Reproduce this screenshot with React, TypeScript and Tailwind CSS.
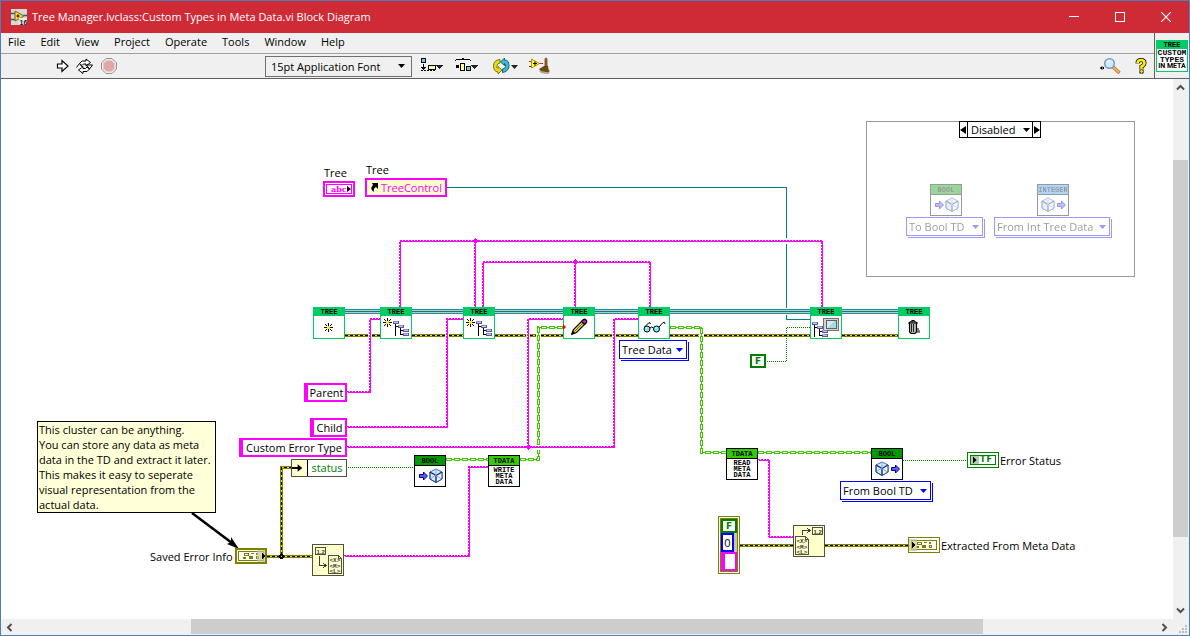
import React from "react";

type Kids = { children?: React.ReactNode };

const MAGENTA = "#ff00ff";
const CHAIN = "#43c800";

/* ---------- wires ---------- */

function StringWire({ d }: { d: string }) {
  return (
    <g fill="none" stroke={MAGENTA}>
      <path d={d} strokeWidth="1" transform="translate(.5 .5)" />
      <path d={d} strokeWidth="1" strokeDasharray="2 1" transform="translate(-.5 -.5)" />
    </g>
  );
}

function ClusterWire({ d }: { d: string }) {
  return (
    <g fill="none">
      <path d={d} stroke="#808000" strokeWidth="3" />
      <path d={d} stroke="#f0e800" strokeWidth="1" />
      <path d={d} stroke="#000" strokeWidth="1" strokeDasharray="3 2" />
    </g>
  );
}

function ObjectWire({ x1, x2 }: { x1: number; x2: number }) {
  return (
    <g>
      <rect x={x1} y="309" width={x2 - x1} height="5" fill="#c4c4c4" />
      <rect x={x1} y="309" width={x2 - x1} height="1" fill="#0c98a0" />
      <rect x={x1} y="311" width={x2 - x1} height="1" fill="#0c7c84" />
      <rect x={x1} y="313" width={x2 - x1} height="1" fill="#0c98a0" />
    </g>
  );
}

function ChainWire({ d }: { d: string }) {
  return (
    <g fill="none">
      <path d={d} stroke={CHAIN} strokeWidth="1" />
      <path d={d} stroke={CHAIN} strokeWidth="3" strokeDasharray="6 2" />
      <path d={d} stroke="#fff" strokeWidth="1" strokeDasharray="4 4" strokeDashoffset="-1" />
    </g>
  );
}

function BoolWire({ d }: { d: string }) {
  return <path d={d} fill="none" stroke="#008000" strokeWidth="1" strokeDasharray="1 1" />;
}

function Junction({ x, y, color }: { x: number; y: number; color: string }) {
  return <path d={`M${x} ${y - 3}l3 3l-3 3l-3-3z`} fill={color} />;
}

function Wires() {
  const objects = [[345, 380], [412, 463], [495, 563], [595, 638], [670, 810], [842, 898]];
  const errors = [
    [345, 368], [372, 380], [412, 445], [449, 463], [495, 526], [530, 536],
    [541, 563], [595, 612], [616, 638], [670, 699], [704, 810], [842, 898],
  ];
  return (
    <svg className="absolute inset-0 size-full" shapeRendering="crispEdges" aria-hidden="true">
      <g transform="translate(-1 -79)">
        {objects.map(([a, b]) => <ObjectWire key={a} x1={a} x2={b} />)}
        {errors.map(([a, b]) => <ClusterWire key={a} d={`M${a} 335.5H${b}`} />)}
        <ClusterWire d="M267 556.500H312" />
        <ClusterWire d="M281.500 555V467.500H291" />
        <circle cx="281.500" cy="556.500" r="2.500" fill="#000" />
        <rect x="281" y="556" width="1" height="1" fill="#f0e800" />
        <ClusterWire d="M740 545.500H793" />
        <ClusterWire d="M825 545.500H908" />

        <path d="M447 187.500H786.500V238M786.500 244V308M786.500 315V319.500H810" fill="none" stroke="#008080" />

        <StringWire d="M400 307V241H822V307" />
        <StringWire d="M475 241V307" />
        <StringWire d="M483 307V262H650V307" />
        <StringWire d="M575 262V307" />
        <StringWire d="M347 392H370V319H380" />
        <StringWire d="M347 427H447V319H463" />
        <StringWire d="M347 447H614V319H638" />
        <StringWire d="M528 447V319H563" />
        <StringWire d="M344 556H469V467H488" />
        <StringWire d="M758 460H769V537H793" />
        <Junction x={475} y={241} color={MAGENTA} />
        <Junction x={575} y={262} color={MAGENTA} />
        <Junction x={528} y={447} color={MAGENTA} />

        <ChainWire d="M446 459.500H488" />
        <ChainWire d="M520 459.500H538.500V450" />
        <ChainWire d="M538.500 445V327.500H563" />
        <ChainWire d="M670 327.500H701.500V452.500H726" />
        <ChainWire d="M758 452.500H871" />

        <BoolWire d="M346 467.500H414" />
        <BoolWire d="M903 460.500H967" />
        <BoolWire d="M767 361.500H786.500V327.500H810" />

        <g shapeRendering="auto">
          <path d="M192 513L232 543" stroke="#000" strokeWidth="2.500" />
          <path d="M239 549L227 544L231 542L231 537z" fill="#000" />
        </g>
      </g>
    </svg>
  );
}

/* ---------- node glyphs (30 x 22 body area) ---------- */

function Spark({ x, y }: { x: number; y: number }) {
  return (
    <g transform={`translate(${x} ${y})`} shapeRendering="crispEdges">
      <path d="M0 4.500H9M4.500 0V9" stroke="#000" />
      <path d="M1 1h1v1h1v1h-1v-1h-1zM7 1h1v1h-1v1h-1v-1h1zM2 6h1v1h-1v1h-1v-1h1zM6 6h1v1h1v1h-1v-1h-1z" fill="#000" />
      <path d="M3 3h1v1h-1zM5 3h1v1h-1zM3 5h1v1h-1zM5 5h1v1h-1zM3 4h3v1h-3zM4 3h1v3h-1z" fill="#ffee00" />
    </g>
  );
}

function Branch({ x, y }: { x: number; y: number }) {
  return (
    <g transform={`translate(${x} ${y})`} shapeRendering="crispEdges">
      <path d="M2.500 3V15M3 5.500H6M7.500 6V13.500H11M8 9.500H11" fill="none" stroke="#000" />
      {[[0, 0], [5, 4], [10, 8], [10, 12]].map(([a, b]) => (
        <g key={`${a}-${b}`}>
          <rect x={a} y={b} width="6" height="3" fill="#5a5a90" />
          <rect x={a + 1} y={b + 1} width="4" height="1" fill="#c4c4ff" />
          <rect x={a} y={b} width="5" height="1" fill="#8c8cc8" />
        </g>
      ))}
    </g>
  );
}

function Glyph({ children }: Kids) {
  return (
    <svg viewBox="0 0 30 22" className="h-[22px] w-[30px] shrink-0" aria-hidden="true">
      {children}
    </svg>
  );
}

const glyphs = {
  spark: <Glyph><Spark x={10} y={7} /></Glyph>,
  add: <Glyph><Spark x={2} y={2} /><Branch x={12} y={5} /></Glyph>,
  pencil: (
    <Glyph>
      <path d="M8 18L9.500 13.500L18.500 4.500L21.500 7.500L12.500 16.500z" fill="#e8e050" stroke="#000" strokeWidth="1.200" />
      <path d="M10.500 15.500L19.500 6.500" stroke="#4a4420" strokeWidth=".8" />
      <path d="M7 19l1.500-4.500l3 3z" fill="#000" />
      <path d="M17.500 5.500L19 4Q20.500 2.500 22 4Q23.500 5.500 22 7L20.500 8.500z" fill="#d020c0" stroke="#000" strokeWidth="1.200" />
    </Glyph>
  ),
  glasses: (
    <Glyph>
      <circle cx="8" cy="13" r="3" fill="#70f0ff" stroke="#000" />
      <circle cx="17.500" cy="13" r="3" fill="#70f0ff" stroke="#000" />
      <path d="M7 12h1M16.500 12h1" stroke="#fff" strokeWidth="1.500" />
      <path d="M11 12Q12.500 10 14.500 12M5.500 11L9.500 7Q11.500 6 11.500 8M20 11L24 6.500Q26 5.500 26 8" fill="none" stroke="#000" />
    </Glyph>
  ),
  display: (
    <Glyph>
      <g shapeRendering="crispEdges">
        <rect x="12" y="2" width="16" height="13" fill="#707070" />
        <rect x="13" y="3" width="14" height="11" fill="#d4d4d4" />
        <rect x="15" y="4" width="11" height="9" fill="#606060" />
        <rect x="16" y="5" width="9" height="7" fill="#a4dce0" />
        <path d="M16 12V5H24z" fill="#d4ecec" />
      </g>
      <Branch x={1} y={6} />
    </Glyph>
  ),
  trash: (
    <Glyph>
      <path d="M18 12h2v2h1v3h-3z" fill="#808080" />
      <path d="M10.500 6.500h7v9.500l-1.500 1.500h-4l-1.500-1.500z" fill="#b8b8b8" stroke="#000" strokeWidth="1.200" />
      <path d="M9.500 7Q14 3 18.500 7zM12.500 4.500h3" fill="#909090" stroke="#000" />
      <path d="M12.500 8v8M14.500 8v8" stroke="#222" />
    </Glyph>
  ),
};

function Cube({ x }: { x: number }) {
  return (
    <g transform={`translate(${x} 4)`}>
      <path d="M6 0L12 3V10L6 13.500L0 10V3z" fill="#dcecff" stroke="#3868b8" />
      <path d="M6 6.500L12 3V10L6 13.500z" fill="#eef6ff" />
      <path d="M0 3L6 6.500V13.500M6 6.500L12 3" fill="none" stroke="#0c2c78" strokeWidth="1.400" />
      <path d="M6 0V6L0 10M6 7L12 10" fill="none" stroke="#88a8dc" />
      <path d="M0 3V10L6 13.500L12 10V3" fill="none" stroke="#204890" />
    </g>
  );
}

function BlueArrow({ x }: { x: number }) {
  return <path d={`M${x} 9.500h4v-2.500l4 4l-4 4v-2.500h-4z`} fill="#5a5aff" stroke="#000090" />;
}

function PackGlyph({ out = false }: { out?: boolean }) {
  return (
    <Glyph>
      {out ? <><Cube x={4} /><BlueArrow x={19.500} /></> : <><BlueArrow x={4.500} /><Cube x={15} /></>}
    </Glyph>
  );
}

/* ---------- nodes ---------- */

function TreeNode({ at, children }: Kids & { at: string }) {
  return (
    <div className={`absolute flex size-8 flex-col border border-[#00cc66] bg-white ${at}`}>
      <div className="h-2 bg-[#00cc66] text-center font-['Liberation_Mono',monospace] text-[7px] leading-[8px] font-bold">TREE</div>
      {children}
    </div>
  );
}

function TypeNode({ at, title, head, children }: Kids & { at: string; title: string; head: string }) {
  return (
    <div className={`absolute flex size-8 flex-col border border-black bg-white font-['Liberation_Mono',monospace] text-[7px] font-bold ${at}`}>
      <div className={`flex h-[10px] shrink-0 items-center justify-center border-b border-black leading-[8px] ${head}`}>{title}</div>
      <div className="flex h-[20px] flex-col items-center justify-center overflow-hidden leading-[6px]">{children}</div>
    </div>
  );
}

function TypeSelect({ at, label, value }: { at: string; label: string; value: string }) {
  return (
    <div className={`absolute flex h-[19px] items-center border border-[#0000ff] bg-white shadow-[1px_1px_0_#fff,2px_2px_0_#0000ff] ${at}`}>
      <select aria-label={label} className="h-full w-full appearance-none bg-transparent pl-[2px] leading-[15px] outline-none">
        <option>{value}</option>
      </select>
      <svg viewBox="0 0 7 4" className="pointer-events-none absolute right-[3px] h-1 w-[7px]" aria-hidden="true">
        <path d="M0 0h7L3.500 4z" fill="#0000ff" />
      </svg>
    </div>
  );
}

function StringConstant({ at, children }: Kids & { at: string }) {
  return (
    <div className={`absolute flex h-[19px] items-center justify-center border-2 border-l-4 border-[#ff00ff] bg-white ${at}`}>
      {children}
    </div>
  );
}

function Label({ at, children }: Kids & { at: string }) {
  return <div className={`absolute ${at}`}>{children}</div>;
}

function FlattenNode({ at, reverse = false }: { at: string; reverse?: boolean }) {
  return (
    <svg viewBox="0 0 32 32" className={`absolute size-8 ${at}`} aria-hidden="true" shapeRendering="crispEdges">
      <rect x=".5" y=".5" width="31" height="31" fill="#ffffcc" stroke="#505040" />
      <g transform={reverse ? "translate(16 -1)" : undefined} fill="none" stroke="#505040">
        <rect x="3.500" y="3.500" width="10" height="7" />
        <text x="4.500" y="9.500" fontSize="6" fontWeight="bold" fontFamily="Liberation Sans, sans-serif" fill="#404030" stroke="none">1.2</text>
      </g>
      <path d={reverse ? "M9.500 10V5.500H17M14 3l3 2.500l-3 2.500" : "M7.500 12V21.500H14M11 19l3 2.500l-3 2.500"} fill="none" stroke="#404030" />
      <g transform={reverse ? "translate(-14 0)" : undefined}>
        <path d="M16.500 11.500H26.500L29.500 14.500V29.500H16.500z" fill="#ffffcc" stroke="#505040" />
        <path d="M26.500 11.500V14.500H29.500" fill="none" stroke="#505040" />
        <g fontSize="6" fontWeight="bold" fontFamily="Liberation Mono, monospace" fill="#404030">
          <text x="17.500" y="18">&lt;X&gt;</text>
          <text x="17.500" y="23.500">&lt;M&gt;</text>
          <text x="17.500" y="29">&lt;L&gt;</text>
        </g>
      </g>
    </svg>
  );
}

function ClusterTerminal({ at, indicator = false }: { at: string; indicator?: boolean }) {
  return (
    <svg viewBox="0 0 32 16" className={`absolute h-4 w-8 ${at}`} aria-hidden="true" shapeRendering="crispEdges">
      <rect width="32" height="16" fill="#808000" />
      {indicator ? <rect x="1" y="1" width="30" height="14" fill="#fff" /> : <rect x="2" y="2" width="28" height="12" fill="#fff" />}
      <rect x="3.500" y="3.500" width="25" height="9" fill="none" stroke="#808000" />
      <path d="M9 5h5v3h-5zM16 5h3v1h-3zM21 5h2v2h-2zM8 9h3v2h-3zM14 8h4v3h-4zM21 8h3v3h-3z" fill="#808000" />
      <path d="M10 6h3v1h-3zM22 9h1v1h-1z" fill="#fff" />
      <rect x={indicator ? 1 : 22} y="2" width="8" height="12" fill="#c4c8a0" fillOpacity=".7" />
      <path d={indicator ? "M4 4.500l3.500 3.500l-3.500 3.500z" : "M27 4.500l3.500 3.500l-3.500 3.500z"} fill="#000" />
    </svg>
  );
}

function Diagram() {
  return (
    <main className="relative min-w-0 flex-1 overflow-hidden bg-white leading-[15px] whitespace-nowrap">
      <Wires />

      <Label at="left-[323px] top-[86px]">Tree</Label>
      <div className="absolute left-[322px] top-[102px] flex h-4 w-8 border-2 border-[#ff00ff] bg-white p-px">
        <div className="flex w-full items-center justify-between border border-[#ff00ff] pl-1 font-['DejaVu_Serif',serif] text-[8px] leading-[8px] font-bold text-[#ff00ff]">
          abc
          <svg viewBox="0 0 4 6" className="h-[6px] w-1" aria-hidden="true"><path d="M0 0l4 3l-4 3z" /></svg>
        </div>
      </div>

      <Label at="left-[365px] top-[83px]">Tree</Label>
      <div className="absolute left-[364px] top-[99px] flex h-[19px] w-[82px] items-center justify-between border-2 border-[#ff00ff] bg-[#ffffcc] px-[3px] text-[#ff00ff]">
        <svg viewBox="0 0 8 9" className="h-[9px] w-2" aria-hidden="true">
          <path d="M2 0h6v6l-2-2q-3 1-2 5q-5-3-1-7z" fill="#000" />
        </svg>
        TreeControl
      </div>

      <TreeNode at="left-[312px] top-[228px]">{glyphs.spark}</TreeNode>
      <TreeNode at="left-[379px] top-[228px]">{glyphs.add}</TreeNode>
      <TreeNode at="left-[462px] top-[228px]">{glyphs.add}</TreeNode>
      <TreeNode at="left-[562px] top-[228px]">{glyphs.pencil}</TreeNode>
      <TreeNode at="left-[637px] top-[228px]">{glyphs.glasses}</TreeNode>
      <TreeNode at="left-[809px] top-[228px]">{glyphs.display}</TreeNode>
      <TreeNode at="left-[897px] top-[228px]">{glyphs.trash}</TreeNode>
      <svg viewBox="0 0 3 6" className="absolute left-[562px] top-[245px] h-[6px] w-[3px]" aria-hidden="true">
        <path d="M0 0l3 3l-3 3z" fill="#f00" />
      </svg>
      <TypeSelect at="left-[618px] top-[261px] w-[68px]" label="Tree node type" value="Tree Data" />

      <div className="absolute left-[749px] top-[275px] flex h-[14px] w-4 items-center justify-center border-2 border-[#008000] bg-white font-['DejaVu_Sans',sans-serif] text-[9px] leading-[10px] font-bold text-[#008000]">F</div>

      <StringConstant at="left-[303px] top-[304px] w-[43px]">Parent</StringConstant>
      <StringConstant at="left-[309px] top-[339px] w-[37px]">Child</StringConstant>
      <StringConstant at="left-[238px] top-[359px] w-[108px]">Custom Error Type</StringConstant>

      <div className="absolute left-[290px] top-[380px] flex h-[18px] w-[56px] border border-[#505040] bg-white text-[#008000]">
        <svg viewBox="0 0 16 16" className="h-4 w-4 shrink-0 border-r border-black bg-[#ffffcc]" aria-hidden="true">
          <path d="M0 7h6v-3l5 4l-5 4v-3h-6z" fill="#000" />
        </svg>
        <span className="flex-1 text-center leading-[16px]">status</span>
      </div>

      <p className="absolute left-[36px] top-[342px] w-[179px] border border-black bg-[#ffffd8] px-px whitespace-pre">
        {"This cluster can be anything.\nYou can store any data as meta\ndata in the TD and extract it later.\nThis makes it easy to seperate\nvisual representation from the\nactual data."}
      </p>

      <Label at="left-[149px] top-[470px]">Saved Error Info</Label>
      <ClusterTerminal at="left-[234px] top-[469px]" />
      <FlattenNode at="left-[311px] top-[465px]" />

      <TypeNode at="left-[413px] top-[376px]" title="BOOL" head="bg-[#009900]"><PackGlyph /></TypeNode>
      <TypeNode at="left-[487px] top-[376px]" title="TDATA" head="bg-[#33cc00]">
        <span>WRITE</span><span>META</span><span>DATA</span>
      </TypeNode>
      <TypeNode at="left-[725px] top-[369px]" title="TDATA" head="bg-[#33cc00]">
        <span>READ</span><span>META</span><span>DATA</span>
      </TypeNode>
      <TypeNode at="left-[870px] top-[369px]" title="BOOL" head="bg-[#009900]"><PackGlyph out /></TypeNode>
      <TypeSelect at="left-[839px] top-[402px] w-[91px]" label="Conversion" value="From Bool TD" />

      <div className="absolute left-[966px] top-[373px] flex h-4 w-8 border border-[#008000] bg-white p-[2px]">
        <div className="flex w-full items-center justify-between border border-[#008000] pr-[3px] font-['DejaVu_Sans',sans-serif] text-[8px] leading-[10px] font-bold text-[#008000]">
          <svg viewBox="0 0 8 8" className="h-2 w-2 bg-[#b0d0b0]" aria-hidden="true"><path d="M2 .5l3.500 3.500l-3.500 3.500z" /></svg>
          <span>T</span>
          <span>F</span>
        </div>
      </div>
      <Label at="left-[999px] top-[374px]">Error Status</Label>

      <div className="absolute left-[717px] top-[437px] flex h-[58px] w-[22px] flex-col items-start border border-[#808000] bg-white p-px">
        <div className="w-full border border-[#808000] bg-[#c8c8a0]">
          <div className="flex h-[14px] w-4 items-center justify-center border-2 border-[#008000] bg-white font-['DejaVu_Sans',sans-serif] text-[9px] leading-[10px] font-bold text-[#008000]">F</div>
          <div className="flex h-[19px] w-[13px] items-center justify-center border-2 border-[#0000ff] bg-white">0</div>
          <div className="h-[19px] w-4 border-2 border-l-4 border-[#ff00ff] bg-white" />
        </div>
      </div>
      <FlattenNode at="left-[792px] top-[446px]" reverse />
      <ClusterTerminal at="left-[907px] top-[458px]" indicator />
      <Label at="left-[940px] top-[459px]">Extracted From Meta Data</Label>

      <section className="absolute left-[865px] top-[42px] h-[156px] w-[269px] border border-[#999999]">
        <div className="opacity-40">
          <TypeNode at="left-[63px] top-[62px]" title="BOOL" head="bg-[#009900]"><PackGlyph /></TypeNode>
          <TypeNode at="left-[170px] top-[62px]" title="INTEGER" head="bg-[#3399ff]"><PackGlyph out /></TypeNode>
          <TypeSelect at="left-[39px] top-[95px] w-[77px]" label="Disabled Bool conversion" value="To Bool TD" />
          <TypeSelect at="left-[127px] top-[95px] w-[116px]" label="Disabled Int conversion" value="From Int Tree Data" />
        </div>
        <div className="absolute left-[92px] -top-px flex h-[17px] w-[82px] border border-black bg-white">
          <button aria-label="Previous case" className="flex w-2 items-center border-r border-black">
            <svg viewBox="0 0 6 8" className="h-2 w-[6px]" aria-hidden="true"><path d="M6 0v8L0 4z" /></svg>
          </button>
          <div className="relative flex flex-1 items-center">
            <select aria-label="Case" className="w-full appearance-none bg-transparent pl-[3px] leading-[15px] outline-none">
              <option>Disabled</option>
            </select>
            <svg viewBox="0 0 7 4" className="pointer-events-none absolute right-[2px] h-1 w-[7px]" aria-hidden="true"><path d="M0 0h7L3.500 4z" /></svg>
          </div>
          <button aria-label="Next case" className="flex w-2 items-center justify-end border-l border-black">
            <svg viewBox="0 0 6 8" className="h-2 w-[6px]" aria-hidden="true"><path d="M0 0v8l6-4z" /></svg>
          </button>
        </div>
      </section>
    </main>
  );
}

/* ---------- window chrome ---------- */

function TitleBar() {
  return (
    <header className="flex h-8 shrink-0 items-center bg-[#ce2b37] pl-[10px] text-white">
      <svg viewBox="0 0 16 16" className="mr-[5px] size-4" aria-hidden="true">
        <rect width="16" height="16" fill="#d8d8d4" />
        <path d="M0 4.500h5M0 10.500h5M12 6.500h4" stroke="#0868a8" strokeWidth="1.500" />
        <path d="M4 2l9 5l-9 5z" fill="#ffd840" stroke="#886000" />
        <path d="M5.500 7h3M7 5.500v3" stroke="#000" />
        <rect x="8" y="9" width="8" height="7" fill="#e8e8e8" />
        <text x="8.500" y="15.500" fontSize="7" fontWeight="bold" fontFamily="Liberation Sans, sans-serif" fill="#222">16</text>
      </svg>
      <h1 className="flex-1 truncate pb-[2px]">Tree Manager.lvclass:Custom Types in Meta Data.vi Block Diagram</h1>
      <button aria-label="Minimize" className="flex h-8 w-[46px] items-center justify-center">
        <svg viewBox="0 0 10 10" className="size-[10px]" shapeRendering="crispEdges" aria-hidden="true"><path d="M0 4.500h10" stroke="#fff" /></svg>
      </button>
      <button aria-label="Maximize" className="flex h-8 w-[46px] items-center justify-center">
        <svg viewBox="0 0 10 10" className="size-[10px]" shapeRendering="crispEdges" aria-hidden="true"><path d="M.5.5h9v9h-9z" fill="none" stroke="#fff" /></svg>
      </button>
      <button aria-label="Close" className="flex h-8 w-[46px] items-center justify-center">
        <svg viewBox="0 0 10 10" className="size-[10px]" aria-hidden="true"><path d="M0 0l10 10M10 0L0 10" stroke="#fff" strokeWidth="1.200" /></svg>
      </button>
    </header>
  );
}

function Caret() {
  return <path d="M18 8h7l-3.500 4z" fill="#222" />;
}

function Tool({ label, className, children }: Kids & { label: string; className: string }) {
  return (
    <button aria-label={label} className={`shrink-0 ${className}`}>
      {children}
    </button>
  );
}

function Toolbar() {
  return (
    <div className="flex h-6 items-center pl-[54px]">
      <Tool label="Run" className="mr-[7px]">
        <svg viewBox="0 0 14 16" className="h-4 w-[14px]" aria-hidden="true">
          <path d="M2.500 6h4.500v-3.500l6 5.500l-6 5.500v-3.500h-4.500z" fill="#fff" stroke="#000" strokeWidth="1.200" />
        </svg>
      </Tool>
      <Tool label="Run continuously" className="mr-2">
        <svg viewBox="0 0 17 16" className="h-4 w-[17px]" aria-hidden="true">
          <path d="M3.500 5.500L6 3H10V1L14.500 4.500L10 8V6H7.500L6 7.500z" fill="#fff" stroke="#000" />
          <path d="M13.500 11L11 13.500H7V15.500L2.500 12L7 8.500V10.500H9.500L11 9z" fill="#fff" stroke="#000" />
          <path d="M.5 9.500L3.500 5.500L6.500 9.500M10.500 7L13.500 11L16.500 7z" fill="#fff" stroke="#000" />
        </svg>
      </Tool>
      <Tool label="Abort" className="mr-[148px]">
        <svg viewBox="0 0 16 16" className="size-4" aria-hidden="true">
          <path d="M5 .5h6l4.500 4.500v6L11 15.500H5L.5 11V5z" fill="#f4e8e8" stroke="#909090" />
          <path d="M5.500 2.500h5l3 3v5l-3 3h-5l-3-3v-5z" fill="#dca8a8" />
        </svg>
      </Tool>
      <div className="relative mr-2 flex h-[21px] w-[147px] items-center border border-[#707070] bg-[#f0f0f0]">
        <select aria-label="Text settings" className="h-full w-full appearance-none bg-transparent pl-[5px] leading-[15px] outline-none">
          <option>15pt Application Font</option>
        </select>
        <svg viewBox="0 0 7 4" className="pointer-events-none absolute right-[6px] h-1 w-[7px]" aria-hidden="true"><path d="M0 0h7L3.500 4z" /></svg>
      </div>
      <Tool label="Align objects" className="mr-[9px]">
        <svg viewBox="0 0 26 18" className="h-[18px] w-[26px]" shapeRendering="crispEdges" aria-hidden="true">
          <rect x="1.500" y="1.500" width="4" height="4" fill="#60d0f0" stroke="#000" />
          <rect x="8.500" y="8.500" width="7" height="4" fill="#ffff90" stroke="#000" />
          <path d="M3.500 7v6" stroke="#000" />
          <path d="M1 10h5v1h-1v1h-1v1h-1v-1h-1v-1h-1z" fill="#000" />
          <path d="M1 13.500h15" stroke="#000" strokeDasharray="2 1" />
          <g transform="translate(-2 0)"><Caret /></g>
        </svg>
      </Tool>
      <Tool label="Distribute objects" className="mr-3">
        <svg viewBox="0 0 26 18" className="h-[18px] w-[26px]" shapeRendering="crispEdges" aria-hidden="true">
          <path d="M0 3.500l2-1h5l1-1.500l1 1.500h5l2 1" fill="none" stroke="#000" />
          <rect x="1" y="8" width="3" height="3" />
          <rect x="5.500" y="6.500" width="4" height="7" fill="#ffff90" stroke="#000" />
          <rect x="11.500" y="9.500" width="4" height="4" fill="#60d0f0" stroke="#000" />
          <g transform="translate(-2 0)"><Caret /></g>
        </svg>
      </Tool>
      <Tool label="Reorder" className="mr-[10px]">
        <svg viewBox="0 0 26 18" className="h-[18px] w-[26px]" aria-hidden="true">
          <path d="M7 2.500Q.5 3 .5 9Q.5 14.500 5 15V17L9 13L5 9.500V11.500Q3.500 11 4 8.500Q4.500 6 7 6z" fill="#e8dc20" stroke="#807800" />
          <path d="M9.500 15.500Q16 14.500 16 8.500Q16 3 11.500 3V1L7.500 5L11.500 8.500V6.500Q13 7 12.500 9.500Q12 12 9.500 12z" fill="#40b8d0" stroke="#106878" />
          <Caret />
        </svg>
      </Tool>
      <Tool label="Clean up diagram" className="">
        <svg viewBox="0 0 22 18" className="h-[18px] w-[22px]" aria-hidden="true">
          <path d="M10 14l4-3l7 2l-1 4h-3l-5-1z" fill="#b0a898" />
          <path d="M0 4.500h3M9 6.500h5" stroke="#e02020" />
          <path d="M0 9.500h3" stroke="#2020e0" />
          <path d="M2.500 2l8 4.500l-8 4.500z" fill="#ffff20" stroke="#c09000" />
          <path d="M4 6.500h4M6 4.500v4" stroke="#000" />
          <path d="M10 12l5-3h4l1 6h-3l-5-1z" fill="#704810" />
          <path d="M16 9V2.500q0-1.500 1-1.500q1 0 1 1.500V9z" fill="#a07028" stroke="#604010" strokeWidth=".8" />
        </svg>
      </Tool>
      <div className="flex flex-1 items-center justify-end gap-3 pr-[6px]">
        <Tool label="Search" className="">
          <svg viewBox="0 0 22 18" className="h-[18px] w-[22px]" aria-hidden="true">
            <path d="M-.5 11l3-2v4zM3 10h1v2h-1z" fill="#000" />
            <path d="M13 10l6.500 6" stroke="#b87830" strokeWidth="3.500" />
            <path d="M13 10l6 5.500" stroke="#f0b060" strokeWidth="2" />
            <circle cx="9.500" cy="6.500" r="4.800" fill="#d0ecff" stroke="#7898c8" strokeWidth="1.500" />
            <path d="M7 6Q7.500 4 10 3.500" fill="none" stroke="#fff" strokeWidth="1.500" />
          </svg>
        </Tool>
        <Tool label="Context help" className="">
          <svg viewBox="0 0 14 18" className="h-[18px] w-[14px]" aria-hidden="true">
            <path d="M3.500 6.500Q3.500 3 7 3Q10.500 3 10.500 6Q10.500 8 7.500 9.500V12" fill="none" stroke="#000" strokeWidth="4" />
            <path d="M5.500 12.500h4v4h-4z" fill="#000" />
            <path d="M3.500 6.500Q3.500 3 7 3Q10.500 3 10.500 6Q10.500 8 7.500 9.500V12" fill="none" stroke="#ffee00" strokeWidth="2.600" />
            <circle cx="7.500" cy="14.500" r="1.400" fill="#ffee00" />
          </svg>
        </Tool>
      </div>
    </div>
  );
}

const menus = ["File", "Edit", "View", "Project", "Operate", "Tools", "Window", "Help"];

function Chevron({ d }: { d: string }) {
  return (
    <svg viewBox="0 0 9 9" className="size-[9px]" aria-hidden="true">
      <path d={d} fill="none" stroke="#505050" strokeWidth="2" />
    </svg>
  );
}

export default function App() {
  return (
    <div className="flex h-screen flex-col border border-[#4a80b8] bg-[#f0f0f0] font-['Open_Sans',sans-serif] text-[11px] leading-[15px] text-black">
      <TitleBar />
      <div className="flex shrink-0 border-b border-[#606060]">
        <div className="min-w-0 flex-1">
          <nav className="flex h-[21px] items-center gap-px border-b border-[#a0a0a0]">
            {menus.map((m) => (
              <button key={m} className="px-[7px] pb-1">{m}</button>
            ))}
          </nav>
          <Toolbar />
        </div>
        <div className="flex w-[35px] items-center border-l border-[#606060] pl-px">
          <div className="flex size-8 flex-col border border-[#00cc66] bg-white text-center font-['Liberation_Mono',monospace] text-[8px] leading-[7px] font-bold">
            <div className="h-2 shrink-0 bg-[#00cc66] text-[7px] leading-[8px]">TREE</div>
            <div className="flex flex-1 flex-col items-center justify-center whitespace-nowrap">
              <span>CUSTOM</span>
              <span>TYPES</span>
              <span className="font-[Roboto,sans-serif] text-[7px]">IN META</span>
            </div>
          </div>
        </div>
      </div>

      <div className="flex min-h-0 flex-1">
        <Diagram />
        <div className="flex w-4 shrink-0 flex-col pr-px">
          <button aria-label="Scroll up" className="flex h-[17px] items-center justify-center"><Chevron d="M1 6.500l3.500-3.500l3.500 3.500" /></button>
          <div className="flex-[64]" />
          <div className="flex-[377] bg-[#cdcdcd]" />
          <div className="flex-[65]" />
          <button aria-label="Scroll down" className="flex h-[17px] items-center justify-center"><Chevron d="M1 2.500l3.500 3.500l3.500-3.500" /></button>
        </div>
      </div>
      <div className="flex h-4 shrink-0">
        <button aria-label="Scroll left" className="flex w-[17px] items-center justify-center"><Chevron d="M6.500 1l-3.500 3.500l3.500 3.500" /></button>
        <div className="flex-[173]" />
        <div className="mb-px flex-[792] bg-[#cdcdcd]" />
        <div className="flex-[173]" />
        <button aria-label="Scroll right" className="flex w-[17px] items-center justify-center"><Chevron d="M2.500 1l3.500 3.500l-3.500 3.500" /></button>
        <div className="flex w-4 items-end justify-end pr-[2px] pb-[2px]">
          <svg viewBox="0 0 8 8" className="size-2" aria-hidden="true">
            <path d="M0 6h2v2h-2zM3 6h2v2h-2zM6 6h2v2h-2zM3 3h2v2h-2zM6 3h2v2h-2zM6 0h2v2h-2z" fill="#bdbdbd" />
          </svg>
        </div>
      </div>
    </div>
  );
}
